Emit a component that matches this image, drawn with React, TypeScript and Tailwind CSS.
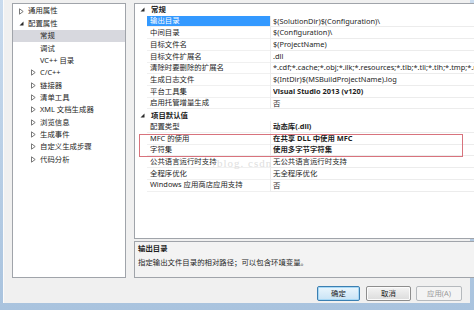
import React from 'react';

type TreeItem = {
  label: string;
  level: number;
  arrow?: 'open' | 'closed';
  selected?: boolean;
};

type GridRow =
  | { kind: 'cat'; label: string }
  | { kind: 'prop'; name: string; value: string; bold?: boolean; selected?: boolean; dropdown?: boolean };

const tree: TreeItem[] = [
  { label: '通用属性', level: 0, arrow: 'closed' },
  { label: '配置属性', level: 0, arrow: 'open' },
  { label: '常规', level: 1, selected: true },
  { label: '调试', level: 1 },
  { label: 'VC++ 目录', level: 1 },
  { label: 'C/C++', level: 1, arrow: 'closed' },
  { label: '链接器', level: 1, arrow: 'closed' },
  { label: '清单工具', level: 1, arrow: 'closed' },
  { label: 'XML 文档生成器', level: 1, arrow: 'closed' },
  { label: '浏览信息', level: 1, arrow: 'closed' },
  { label: '生成事件', level: 1, arrow: 'closed' },
  { label: '自定义生成步骤', level: 1, arrow: 'closed' },
  { label: '代码分析', level: 1, arrow: 'closed' },
];

const rows: GridRow[] = [
  { kind: 'cat', label: '常规' },
  { kind: 'prop', name: '输出目录', value: '$(SolutionDir)$(Configuration)\\', selected: true, dropdown: true },
  { kind: 'prop', name: '中间目录', value: '$(Configuration)\\' },
  { kind: 'prop', name: '目标文件名', value: '$(ProjectName)' },
  { kind: 'prop', name: '目标文件扩展名', value: '.dll' },
  { kind: 'prop', name: '清除时要删除的扩展名', value: '*.cdf;*.cache;*.obj;*.ilk;*.resources;*.tlb;*.tli;*.tlh;*.tmp;*.rsp' },
  { kind: 'prop', name: '生成日志文件', value: '$(IntDir)$(MSBuildProjectName).log' },
  { kind: 'prop', name: '平台工具集', value: 'Visual Studio 2013 (v120)', bold: true },
  { kind: 'prop', name: '启用托管增量生成', value: '否' },
  { kind: 'cat', label: '项目默认值' },
  { kind: 'prop', name: '配置类型', value: '动态库(.dll)', bold: true },
  { kind: 'prop', name: 'MFC 的使用', value: '在共享 DLL 中使用 MFC', bold: true },
  { kind: 'prop', name: '字符集', value: '使用多字节字符集', bold: true },
  { kind: 'prop', name: '公共语言运行时支持', value: '无公共语言运行时支持' },
  { kind: 'prop', name: '全程序优化', value: '无全程序优化' },
  { kind: 'prop', name: 'Windows 应用商店应用支持', value: '否' },
];

const ClosedArrow = () => (
  <svg width="5" height="7" viewBox="0 0 5 7" className="block">
    <path d="M0.5 0.8 L4.2 3.5 L0.5 6.2 Z" fill="white" stroke="#6b6b6b" strokeWidth="0.9" />
  </svg>
);

const OpenArrow = () => (
  <svg width="5" height="5" viewBox="0 0 5 5" className="block">
    <path d="M4.5 0.5 L4.5 4.5 L0.5 4.5 Z" fill="#2b2b2b" />
  </svg>
);

const TreeRow = ({ item }: { item: TreeItem }) => (
  <div
    className={`flex items-center h-[12.35px] ${item.selected ? 'bg-[#d7d8de]' : ''}`}
    style={{ paddingLeft: 5 + item.level * 12 }}
  >
    <div className="w-[10px] flex items-center pl-[1px]">
      {item.arrow === 'closed' && <ClosedArrow />}
      {item.arrow === 'open' && <OpenArrow />}
    </div>
    <span className="whitespace-nowrap">{item.label}</span>
  </div>
);

const PropRow = ({ row }: { row: GridRow }) => {
  if (row.kind === 'cat') {
    return (
      <div className="flex items-center h-[11.73px]">
        <div className="w-[12px] flex items-center justify-center pl-[2px]">
          <OpenArrow />
        </div>
        <span className="pl-[4px] font-bold text-[#1b1b1b]">{row.label}</span>
      </div>
    );
  }
  return (
    <div className="flex h-[11.73px]">
      <div className="w-[12px] shrink-0" />
      <div
        className={`w-[123px] shrink-0 flex items-center pl-[3px] border-b border-[#f0f0f0] whitespace-nowrap ${
          row.selected ? 'bg-[#3399ff] text-white border-[#3399ff]' : ''
        }`}
      >
        {row.name}
      </div>
      <div className="flex-1 min-w-0 flex items-center border-l border-b border-[#ececec] pl-[2px] pr-[1px]">
        <span
          className={`flex-1 min-w-0 leading-[11px] whitespace-nowrap overflow-x-clip ${row.bold ? 'font-bold' : ''}`}
        >
          {row.value}
        </span>
        {row.dropdown && (
          <div className="flex-none w-[9px] h-[9px] border border-[#6f7070] bg-[#d6d6d6] flex items-center justify-center">
            <svg width="5" height="3" viewBox="0 0 5 3" className="block">
              <path d="M0 0 L5 0 L2.5 3 Z" fill="#000" />
            </svg>
          </div>
        )}
      </div>
    </div>
  );
};

const Button = ({ label, variant }: { label: string; variant: 'default' | 'normal' | 'disabled' }) => {
  const cls =
    variant === 'default'
      ? 'border-[#3c7fb1] bg-gradient-to-b from-[#eaf6fd] to-[#c9e3f5] text-[#1b1b1b] shadow-[inset_0_0_0_1px_#a6d8f6]'
      : variant === 'normal'
      ? 'border-[#8d8d8d] bg-gradient-to-b from-[#f4f4f4] to-[#dcdcdc] text-[#1b1b1b] shadow-[inset_0_0_0_1px_#fbfbfb]'
      : 'border-[#b5b9bd] bg-[#f4f4f4] text-[#9a9a9a]';
  return (
    <div className={`h-[15px] flex items-center justify-center border rounded-[2px] ${cls}`}>{label}</div>
  );
};

export default function App() {
  return (
    <div className="w-[474px] h-[310px] overflow-hidden bg-gradient-to-b from-[#c9dbee] to-[#a9c3de] pl-[3px] pr-[4px] pb-[7px] font-['Noto_Sans','Noto_Sans_CJK_SC',sans-serif] text-[7.4px] leading-none text-[#1e1e1e]">
      <div className="h-full bg-[#f0f0f0] border-l border-[#fbfbfb] flex flex-col pl-[8px] pr-[6px] pt-[3px]">
        <div className="flex gap-[8px] h-[275px]">
          {/* tree */}
          <div className="w-[114px] shrink-0 bg-white border border-[#a0a4aa] pt-[1px] text-[#262626]">
            {tree.map((t) => (
              <TreeRow key={t.label} item={t} />
            ))}
          </div>

          {/* right side */}
          <div className="flex-1 flex flex-col gap-[2px]">
            <div className="relative h-[236px] bg-white border border-[#a0a4aa]">
              {rows.map((r, i) => (
                <PropRow key={i} row={r} />
              ))}
              <div className="absolute left-[4px] top-[130px] w-[324px] h-[23px] border border-[#d8737d]" />
              <div className="absolute left-[78px] top-[154px] font-['Liberation_Serif',serif] text-[11px] text-[#dedede] tracking-[1px]">
                /blog. csdn
              </div>
            </div>
            <div className="h-[37px] bg-[#f3f3f3] border border-[#a0a4aa] pl-[3px] pt-[3px] flex flex-col gap-[7px]">
              <div className="font-bold">输出目录</div>
              <div>指定输出文件目录的相对路径；可以包含环境变量。</div>
            </div>
          </div>
        </div>

        <div className="flex justify-end mt-[8px] pr-[2px]">
          <div className="w-[43px]">
            <Button label="确定" variant="default" />
          </div>
          <div className="w-[45px] ml-[6px]">
            <Button label="取消" variant="normal" />
          </div>
          <div className="w-[46px] ml-[5px]">
            <Button label="应用(A)" variant="disabled" />
          </div>
        </div>
      </div>
    </div>
  );
}
